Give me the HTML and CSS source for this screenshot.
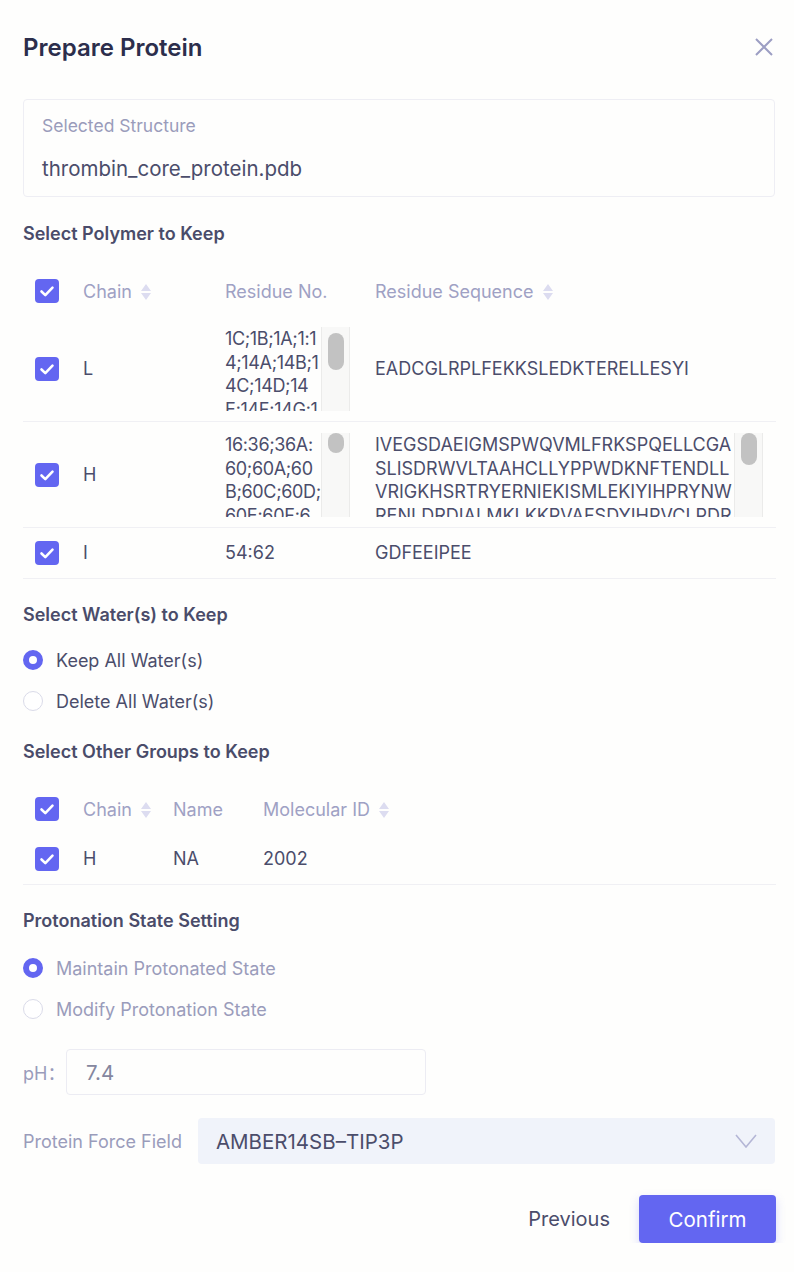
FILE: index.html
```html
<!DOCTYPE html>
<html lang="en">
<head>
  <meta charset="UTF-8" />
  <meta name="viewport" content="width=device-width, initial-scale=1.0" />
  <title>Prepare Protein</title>
  <link rel="stylesheet" href="styles.css">
</head>
<body>
  <div class="modal">
    <div class="modal-header">
      <h2>Prepare Protein</h2>
      <button class="close" aria-label="Close">
        <svg width="18" height="18" viewBox="0 0 18 18"><path d="M1 1L17 17M17 1L1 17" stroke="currentColor" stroke-width="2" fill="none"/></svg>
      </button>
    </div>

    <div class="structure-box">
      <div class="structure-label">Selected Structure</div>
      <div class="structure-name">thrombin_core_protein.pdb</div>
    </div>

    <h3 class="section-title">Select Polymer to Keep</h3>
    <table class="grid polymer">
      <colgroup>
        <col class="c-check"><col class="c-chain"><col class="c-resno"><col>
      </colgroup>
      <thead>
        <tr>
          <th><span class="checkbox"></span></th>
          <th>Chain <span class="sorter"></span></th>
          <th>Residue No.</th>
          <th>Residue Sequence <span class="sorter"></span></th>
        </tr>
      </thead>
      <tbody>
        <tr>
          <td><span class="checkbox"></span></td>
          <td>L</td>
          <td>
            <div class="scroll-cell">
              <div class="scroll-text">1C;1B;1A;1:14;14A;14B;14C;14D;14E;14F;14G;14H;14I;14J;14K;14L;14M;15</div>
              <div class="scrollbar"><span class="thumb thumb-lg"></span></div>
            </div>
          </td>
          <td>EADCGLRPLFEKKSLEDKTERELLESYI</td>
        </tr>
        <tr>
          <td><span class="checkbox"></span></td>
          <td>H</td>
          <td>
            <div class="scroll-cell">
              <div class="scroll-text">16:36;36A:60;60A;60B;60C;60D;60E;60F;60G;60H;60I;61:129;129A;129B;129C;130:146</div>
              <div class="scrollbar"><span class="thumb thumb-sm"></span></div>
            </div>
          </td>
          <td>
            <div class="scroll-cell">
              <div class="scroll-text seq">IVEGSDAEIGMSPWQVMLFRKSPQELLCGASLISDRWVLTAAHCLLYPPWDKNFTENDLLVRIGKHSRTRYERNIEKISMLEKIYIHPRYNWRENLDRDIALMKLKKPVAFSDYIHPVCLPDRETAASLLQAGYKGRVTGWGNLKETWTANVGKGQPSVLQVVNLPIVERPVCKDSTRIRITDNMFCAGYKPDEGKRGDACEGDSGGPFVMKSPFNNRWYQMGIVSWGEGCDRDGKYGFYTHVFRLKKWIQKVIDQFGE</div>
              <div class="scrollbar"><span class="thumb thumb-md"></span></div>
            </div>
          </td>
        </tr>
        <tr class="short">
          <td><span class="checkbox"></span></td>
          <td>I</td>
          <td>54:62</td>
          <td>GDFEEIPEE</td>
        </tr>
      </tbody>
    </table>

    <h3 class="section-title">Select Water(s) to Keep</h3>
    <div class="radio-group">
      <label class="radio"><span class="dot checked"></span>Keep All Water(s)</label>
      <label class="radio"><span class="dot"></span>Delete All Water(s)</label>
    </div>

    <h3 class="section-title">Select Other Groups to Keep</h3>
    <table class="grid groups">
      <colgroup>
        <col class="c-check"><col class="c-small"><col class="c-small"><col>
      </colgroup>
      <thead>
        <tr>
          <th><span class="checkbox"></span></th>
          <th>Chain <span class="sorter"></span></th>
          <th>Name</th>
          <th>Molecular ID <span class="sorter"></span></th>
        </tr>
      </thead>
      <tbody>
        <tr class="short">
          <td><span class="checkbox"></span></td>
          <td>H</td>
          <td>NA</td>
          <td>2002</td>
        </tr>
      </tbody>
    </table>

    <h3 class="section-title">Protonation State Setting</h3>
    <div class="radio-group muted">
      <label class="radio"><span class="dot checked"></span>Maintain Protonated State</label>
      <label class="radio"><span class="dot"></span>Modify Protonation State</label>
    </div>

    <div class="ph-row">
      <span class="ph-label">pH：</span>
      <div class="ph-input">7.4</div>
    </div>

    <div class="field-row">
      <span class="field-label">Protein Force Field</span>
      <div class="select">
        <span>AMBER14SB–TIP3P</span>
        <svg width="22" height="14" viewBox="0 0 22 14"><path d="M1 1L11 13L21 1" stroke="currentColor" stroke-width="1.6" fill="none"/></svg>
      </div>
    </div>

    <div class="actions">
      <button class="btn-link">Previous</button>
      <button class="btn-primary">Confirm</button>
    </div>
  </div>
</body>
</html>
```

FILE: styles.css
```css
body {
  margin: 0;
  font-family: 'Inter', 'Noto Sans CJK SC', sans-serif;
  background: #fefefd;
  color: #4b4d6b;
}

.modal {
  padding: 30px 18px 0 23px;
}

.modal-header {
  display: flex;
  justify-content: space-between;
  align-items: center;
  height: 34px;
}

.modal-header h2 {
  margin: 0;
  font-size: 24px;
  font-weight: 600;
  color: #2c2e4c;
}

.close {
  border: none;
  background: none;
  padding: 0;
  margin-right: 3px;
  color: #9c9ec3;
  display: flex;
}

.structure-box {
  margin-top: 35px;
  border: 1px solid #eeeef4;
  border-radius: 4px;
  padding: 14px 18px;
  margin-right: 1px;
}

.structure-label {
  font-size: 17.5px;
  line-height: 24px;
  color: #9a9cbb;
}

.structure-name {
  margin-top: 18px;
  font-size: 20.5px;
  line-height: 26px;
  color: #4b4d6b;
}

.section-title {
  margin: 25px 0 0;
  font-size: 18px;
  line-height: 24px;
  font-weight: 600;
  color: #4a4c6a;
}

/* tables */
.grid {
  width: 100%;
  border-collapse: collapse;
  table-layout: fixed;
  font-size: 18px;
  margin-top: 19px;
}

.grid col.c-check { width: 48px; }
.grid col.c-chain { width: 142px; }
.grid col.c-resno { width: 150px; }
.grid col.c-small { width: 90px; }

.grid th {
  height: 50px;
  padding: 0 12px;
  text-align: left;
  font-weight: 400;
  color: #9fa1c4;
  white-space: nowrap;
}

.grid td {
  padding: 11px 13px 10px 12px;
  border-bottom: 1px solid #f0f0f4;
  line-height: 24px;
  vertical-align: middle;
}

.grid tr.short td {
  padding-top: 13px;
  padding-bottom: 13px;
}

.grid th:first-child,
.grid td:first-child {
  padding-right: 0;
}

.checkbox {
  display: block;
  width: 24px;
  height: 24px;
  border-radius: 4px;
  background: #6366f1 url("data:image/svg+xml,%3Csvg xmlns='http://www.w3.org/2000/svg' width='24' height='24'%3E%3Cpath d='M6.5 12.5l3.8 3.6 7.2-7.4' stroke='white' stroke-width='2.6' fill='none' stroke-linecap='round' stroke-linejoin='round'/%3E%3C/svg%3E") no-repeat center;
}

.sorter {
  display: inline-block;
  vertical-align: -3px;
  margin-left: 4px;
  width: 10px;
  height: 18px;
  background: url("data:image/svg+xml,%3Csvg xmlns='http://www.w3.org/2000/svg' width='10' height='18'%3E%3Cpath d='M5 1L10 8H0Z M5 17L10 10H0Z' fill='%23dcdcf0'/%3E%3C/svg%3E") no-repeat;
}

.scroll-cell {
  display: flex;
  height: 84px;
}

.scroll-text {
  flex: 1;
  overflow: hidden;
  word-break: break-all;
  line-height: 23.5px;
  letter-spacing: -0.35px;
}

.scroll-text.seq {
  letter-spacing: 0;
}

.scrollbar {
  width: 27px;
  flex-shrink: 0;
  background: #f8f8f7;
  border-left: 1px solid #ebebea;
  border-right: 1px solid #ebebea;
}

.thumb {
  display: block;
  width: 16px;
  margin: 0 auto;
  border-radius: 8px;
  background: #c2c2c2;
}

.thumb-lg { height: 37px; margin-top: 6px; }
.thumb-md { height: 32px; }
.thumb-sm { height: 20px; }

/* radios */
.radio-group {
  margin-top: 18px;
  display: flex;
  flex-direction: column;
  gap: 11px;
}

.radio {
  display: flex;
  align-items: center;
  gap: 13px;
  height: 30px;
  font-size: 18px;
}

.radio-group.muted {
  margin-top: 20px;
}

.radio-group.muted .radio {
  color: #9a9cbb;
}

.dot {
  width: 20px;
  height: 20px;
  box-sizing: border-box;
  border-radius: 50%;
  border: 1px solid #dadbe9;
  background: #fff;
}

.dot.checked {
  border: 6px solid #6366f1;
}

.section-title + .grid { margin-top: 20px; }
.radio-group + .section-title { margin-top: 24px; }
.grid + .section-title { margin-top: 24px; }

.ph-row {
  margin-top: 25px;
  display: flex;
  align-items: center;
}

.ph-label {
  width: 43px;
  font-size: 18px;
  color: #9a9cbb;
}

.ph-input {
  width: 360px;
  height: 46px;
  box-sizing: border-box;
  border: 1px solid #ececf3;
  border-radius: 4px;
  padding: 0 19px;
  display: flex;
  align-items: center;
  font-size: 20.5px;
  color: #85879f;
}

.field-row {
  margin-top: 23px;
  display: flex;
  align-items: center;
  gap: 16px;
}

.field-label {
  font-size: 18px;
  color: #9a9cbb;
  white-space: nowrap;
}

.select {
  flex: 1;
  height: 46px;
  border-radius: 4px;
  background: #f0f3fa;
  display: flex;
  align-items: center;
  justify-content: space-between;
  padding: 0 18px;
  font-size: 20.5px;
  color: #4b4d6b;
  margin-right: 1px;
}

.select svg {
  color: #b4b6d6;
}

.actions {
  margin-top: 31px;
  display: flex;
  justify-content: flex-end;
  align-items: center;
  gap: 29px;
}

.btn-link {
  border: none;
  background: none;
  padding: 0;
  font-family: inherit;
  font-size: 20px;
  color: #4b4d6b;
}

.btn-primary {
  width: 137px;
  height: 48px;
  border: none;
  border-radius: 4px;
  background: #6366f1;
  color: #fff;
  font-family: inherit;
  font-size: 20.5px;
  box-shadow: 0 4px 10px rgba(99, 102, 241, 0.25);
}
```
